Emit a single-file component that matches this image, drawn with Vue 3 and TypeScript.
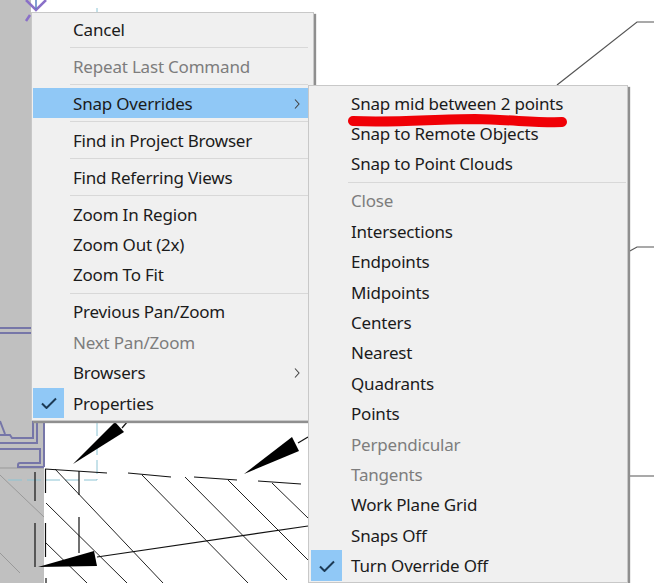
<script setup lang="ts">
interface Item { label: string; disabled?: boolean; checked?: boolean; active?: boolean; sub?: boolean; sep?: boolean }
const mainItems: Item[] = [
  { label: 'Cancel', sep: true },
  { label: 'Repeat Last Command', disabled: true, sep: true },
  { label: 'Snap Overrides', active: true, sub: true, sep: true },
  { label: 'Find in Project Browser', sep: true },
  { label: 'Find Referring Views', sep: true },
  { label: 'Zoom In Region' },
  { label: 'Zoom Out (2x)' },
  { label: 'Zoom To Fit', sep: true },
  { label: 'Previous Pan/Zoom' },
  { label: 'Next Pan/Zoom', disabled: true },
  { label: 'Browsers', sub: true },
  { label: 'Properties', checked: true },
]
const subItems: Item[] = [
  { label: 'Snap mid between 2 points' },
  { label: 'Snap to Remote Objects' },
  { label: 'Snap to Point Clouds', sep: true },
  { label: 'Close', disabled: true },
  { label: 'Intersections' },
  { label: 'Endpoints' },
  { label: 'Midpoints' },
  { label: 'Centers' },
  { label: 'Nearest' },
  { label: 'Quadrants' },
  { label: 'Points' },
  { label: 'Perpendicular', disabled: true },
  { label: 'Tangents', disabled: true },
  { label: 'Work Plane Grid' },
  { label: 'Snaps Off' },
  { label: 'Turn Override Off', checked: true },
]
const hatch: number[][] = [
  [55, 469, 163, 583], [142, 475, 248, 583], [185, 477, 287, 580], [228, 480, 308, 560],
  [272, 483, 308, 518], [46, 503, 127, 583], [46, 543, 87, 583],
]
const dashes: number[][] = [
  [45, 469, 107, 473], [128, 473, 171, 477], [194, 477, 237, 480], [258, 481, 301, 484],
  [45.5, 469, 45.5, 493], [45.5, 523, 45.5, 557], [79, 471, 79, 495], [79, 517, 79, 553],
  [35, 472, 35, 501], [35, 523, 35, 567], [97, 557, 308, 526], [298, 443, 308, 437],
  [46, 578, 46, 583], [122, 428, 128, 421],
]
</script>

<template>
  <div class="stage">
    <svg class="drawing" width="654" height="583" viewBox="0 0 654 583">
      <rect x="0" y="0" width="31" height="421" fill="#c0c0c0" />
      <rect x="0" y="421" width="44" height="162" fill="#c0c0c0" />
      <line x1="0" y1="468" x2="44" y2="468" stroke="#999" />
      <line x1="0" y1="475" x2="44" y2="517" stroke="#999" />
      <line x1="0" y1="553" x2="20" y2="573" stroke="#999" />
      <path d="M0 328H31M0 333H31" stroke="#7676a8" stroke-width="2" fill="none" />
      <path d="M0 421L5 434M0 435H10L12 438H33V421M0 443H37V421M44 421V467M0 449H40V463H20Q18 463 18 465V467H44" stroke="#7676a8" stroke-width="2" fill="none" />
      <path d="M26 0L36 10L46 0M26 21L30 15" stroke="#8a70c8" stroke-width="2.5" fill="none" />
      <path d="M36 0V9" stroke="#5a7fc0" stroke-width="1.5" fill="none" />
      <path d="M97 8V12M97 422V480H7" stroke="#8cc4d4" stroke-dasharray="14 5" fill="none" />
      <line v-for="(l, i) in hatch" :key="'h' + i" :x1="l[0]" :y1="l[1]" :x2="l[2]" :y2="l[3]" stroke="#222" />
      <line v-for="(l, i) in dashes" :key="'d' + i" :x1="l[0]" :y1="l[1]" :x2="l[2]" :y2="l[3]" stroke="#111" stroke-width="1.2" />
      <path d="M557 85L637 22H654M628 252L637 247H654M628 476H654" stroke="#555" stroke-width="1.2" fill="none" />
      <polygon points="73,464 115,422 124,432" fill="#000" />
      <polygon points="244,474 292,437 299,451" fill="#000" />
      <polygon points="38,567 94,551 97,566" fill="#000" />
    </svg>

    <ul class="menu main-menu">
      <template v-for="item in mainItems" :key="item.label">
        <li class="row" :class="{ disabled: item.disabled, active: item.active, checked: item.checked }">
          <span v-if="item.checked" class="check">
            <svg width="16" height="12" viewBox="0 0 16 12"><path d="M1 6.5L5.5 11L15 1.5" fill="none" stroke="#1c3a55" stroke-width="2" /></svg>
          </span>
          <span class="label">{{ item.label }}</span>
          <svg v-if="item.sub" class="chev" width="6" height="10" viewBox="0 0 6 10"><path d="M1 0.5L5 5L1 9.5" fill="none" stroke="#444" stroke-width="1.1" /></svg>
        </li>
        <li v-if="item.sep" class="sep"></li>
      </template>
    </ul>

    <ul class="menu sub-menu">
      <template v-for="item in subItems" :key="item.label">
        <li class="row" :class="{ disabled: item.disabled, checked: item.checked }">
          <span v-if="item.checked" class="check">
            <svg width="16" height="12" viewBox="0 0 16 12"><path d="M1 6.5L5.5 11L15 1.5" fill="none" stroke="#1c3a55" stroke-width="2" /></svg>
          </span>
          <span class="label">{{ item.label }}</span>
        </li>
        <li v-if="item.sep" class="sep"></li>
      </template>
    </ul>

    <svg class="scribble" width="230" height="20" viewBox="0 0 230 20">
      <path d="M8 8C50 10 90 6 130 6C170 7 195 10 217 9" fill="none" stroke="#f00006" stroke-width="10" stroke-linecap="round" />
    </svg>
  </div>
</template>

<style scoped>
.stage {
  position: relative;
  width: 654px;
  height: 583px;
  overflow: hidden;
  background: #fff;
  font-family: "Noto Sans", "Open Sans", sans-serif;
  font-size: 17px;
  letter-spacing: -0.2px;
  color: #1b1b1b;
}
.drawing { position: absolute; left: 0; top: 0; }
.menu {
  position: absolute;
  list-style: none;
  margin: 0;
  background: #f0f0f0;
  border: 1px solid #c8c8c8;
  box-shadow: 2px 2px 1px #8f8f8f;
  box-sizing: border-box;
}
.main-menu { left: 31px; top: 12px; width: 283px; height: 409px; padding: 1px 5px 0 1px; }
.sub-menu { left: 308px; top: 85px; width: 320px; height: 498px; padding: 2px 1px 0 2px; }
.row {
  position: relative;
  height: 30.4px;
  display: flex;
  align-items: center;
  padding-left: 40px;
  white-space: nowrap;
}
.sep { height: 1px; margin: 2.8px 0 2.8px 37px; background: #d8d8d8; }
.row.disabled { color: #7d7d7d; }
.row.active { background: #90c8f6; }
.check {
  position: absolute;
  left: 0;
  top: 0;
  width: 31px;
  height: 100%;
  background: #90c8f6;
  display: flex;
  align-items: center;
  justify-content: center;
}
.chev { position: absolute; right: 8px; top: 11px; }
.scribble { position: absolute; left: 345px; top: 113px; }
</style>
